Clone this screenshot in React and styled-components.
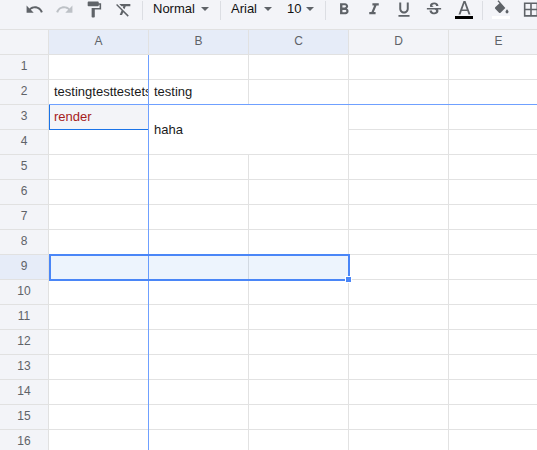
import React from 'react';
import styled, { createGlobalStyle } from 'styled-components';
import {
	MdUndo,
	MdRedo,
	MdFormatPaint,
	MdFormatClear,
	MdFormatBold,
	MdFormatItalic,
	MdFormatUnderlined,
	MdStrikethroughS,
	MdBorderAll,
} from 'react-icons/md';

const GlobalStyle = createGlobalStyle`
	html, body {
		margin: 0;
		padding: 0;
		background: #ffffff;
		overflow: hidden;
	}
`;

const Page = styled.div`
	width: 537px;
	height: 450px;
	overflow: hidden;
	font-family: 'Liberation Sans', Arial, sans-serif;
`;

const Toolbar = styled.div`
	display: flex;
	align-items: flex-start;
	height: 29px;
	padding-left: 19px;
	background: #f3f4f8;
	border-bottom: 1px solid #e1e1e1;
	color: #5f6368;
	white-space: nowrap;
`;

const IconSlot = styled.div`
	flex: none;
	display: flex;
	flex-direction: column;
	align-items: center;
	justify-content: center;
	width: 30px;
	height: 19px;
	color: ${(props) => props.color || '#5f6368'};
`;

const Separator = styled.div`
	flex: none;
	width: 1px;
	height: 19px;
	margin: 1px ${(props) => props.right ?? 10}px 0 ${(props) => props.left ?? 3}px;
	background: #dcdee3;
`;

const Select = styled.div`
	flex: none;
	display: flex;
	align-items: center;
	width: ${(props) => props.width}px;
	height: 17px;
	margin-left: ${(props) => props.left || 0}px;
	font-size: 13px;
	color: #111111;
`;

const Arrow = styled.span`
	margin-left: auto;
	margin-right: 11px;
	border-left: 4px solid transparent;
	border-right: 4px solid transparent;
	border-top: 4px solid #5f6368;
`;

const ColorSlot = styled(IconSlot)`
	position: relative;
	justify-content: flex-start;
	padding-top: ${(props) => props.top || 0}px;
	box-sizing: border-box;
`;

const ColorBar = styled.div`
	position: absolute;
	left: 6px;
	top: 16px;
	width: 18px;
	height: 3px;
	background: ${(props) => props.color};
`;

const Sheet = styled.div`
	position: relative;
	display: grid;
	grid-template-columns: 49px repeat(5, 100px);
	grid-auto-rows: 25px;
	height: 420px;
	overflow: hidden;
	font-size: 13px;
`;

const Corner = styled.div`
	background: #f3f4f8;
	border-right: 1px solid #e1e1e1;
	border-bottom: 1px solid #e1e1e1;
`;

const ColumnHead = styled.div`
	display: flex;
	align-items: center;
	justify-content: center;
	padding-bottom: 2px;
	box-sizing: border-box;
	background: ${(props) => (props.active ? '#e6ecf8' : '#f3f4f8')};
	border-right: 1px solid #e1e1e1;
	border-bottom: 1px solid #e1e1e1;
	color: #5f6368;
	font-size: 12px;
`;

const RowHead = styled(ColumnHead)`
	background: ${(props) => (props.active ? '#e6ecf8' : '#f3f4f8')};
`;

const Cell = styled.div`
	display: flex;
	align-items: center;
	box-sizing: border-box;
	padding: 0 0 2px 5px;
	overflow: hidden;
	white-space: nowrap;
	background: #ffffff;
	border-right: 1px solid #e2e2e2;
	border-bottom: 1px solid #e2e2e2;
	color: #1a1a1a;
`;

const FocusedCell = styled(Cell)`
	padding-left: 4px;
	background: #f3f4f8;
	border-left: 1px solid #1a73e8;
	border-bottom: 1px solid #1a73e8;
	color: #a61c1c;
`;

const MergedCell = styled(Cell)`
	grid-column: span 2;
	grid-row: span 2;
	padding-bottom: 0;
`;

const FreezeColumn = styled.div`
	position: absolute;
	left: 148px;
	top: 25px;
	bottom: 0;
	width: 1px;
	background: #6fa0ff;
`;

const FreezeRow = styled.div`
	position: absolute;
	left: 49px;
	right: 0;
	top: 74px;
	height: 1px;
	background: #6fa0ff;
`;

const Selection = styled.div`
	position: absolute;
	left: 49px;
	top: 224px;
	width: 301px;
	height: 27px;
	box-sizing: border-box;
	border: 2px solid #4a86f7;
	background: rgba(26, 115, 232, 0.08);
`;

const Handle = styled.div`
	position: absolute;
	right: -3px;
	bottom: -3px;
	width: 5px;
	height: 5px;
	background: #4a86f7;
	box-shadow: 0 0 0 1px #ffffff;
`;

const columns = ['A', 'B', 'C', 'D', 'E'];
const rows = Array.from({ length: 16 }, (_, i) => i + 1);

const contents = {
	A2: 'testingtesttestets',
	B2: 'testing',
};

const TextColorIcon = () => (
	<svg width="13" height="14" viewBox="0 0 13 14">
		<path fill="#5f6368" d="M5.500 0h2l5 13.500h-2l-1.200-3.400H3.700l-1.200 3.400h-2L5.500 0zM4.300 8.400h4.400L6.500 2.300 4.300 8.400z" />
	</svg>
);

const FillIcon = () => (
	<svg width="17" height="14" viewBox="0 0 20 16">
		<path
			fill="#5f6368"
			d="M6.500 0L5.300 1.200l2.300 2.300L2.600 8.400c-.5.500-.5 1.300 0 1.800l4.500 4.500c.5.500 1.300.5 1.800 0l5.600-5.600L6.500 0zM16.500 10.500s-1.800 2-1.800 3.200c0 1 .8 1.800 1.800 1.800s1.800-.8 1.800-1.800c0-1.200-1.800-3.200-1.800-3.200z"
		/>
	</svg>
);

function renderRow(row) {
	const cells = [];
	columns.forEach((column) => {
		const id = column + row;
		if (id === 'A3') {
			cells.push(<FocusedCell key={id}>render</FocusedCell>);
		} else if (id === 'B3') {
			cells.push(<MergedCell key={id}>haha</MergedCell>);
		} else if (id !== 'C3' && id !== 'B4' && id !== 'C4') {
			cells.push(<Cell key={id}>{contents[id]}</Cell>);
		}
	});
	return (
		<React.Fragment key={row}>
			<RowHead active={row === 9}>{row}</RowHead>
			{cells}
		</React.Fragment>
	);
}

export default function App() {
	return (
		<Page>
			<GlobalStyle />
			<Toolbar>
				<IconSlot><MdUndo size={21} /></IconSlot>
				<IconSlot color="#bdc1c6"><MdRedo size={21} /></IconSlot>
				<IconSlot><MdFormatPaint size={22} /></IconSlot>
				<IconSlot><MdFormatClear size={22} /></IconSlot>
				<Separator />
				<Select width={67}>Normal<Arrow /></Select>
				<Separator left={0} />
				<Select width={52}>Arial<Arrow /></Select>
				<Select width={38} left={4}>10<Arrow /></Select>
				<Separator left={0} right={3} />
				<IconSlot><MdFormatBold size={24} /></IconSlot>
				<IconSlot><MdFormatItalic size={24} /></IconSlot>
				<IconSlot><MdFormatUnderlined size={22} /></IconSlot>
				<IconSlot><MdStrikethroughS size={22} /></IconSlot>
				<ColorSlot top={1}>
					<TextColorIcon />
					<ColorBar color="#000000" />
				</ColorSlot>
				<Separator left={3} right={3} />
				<ColorSlot>
					<FillIcon />
					<ColorBar color="#ffffff" />
				</ColorSlot>
				<IconSlot><MdBorderAll size={22} /></IconSlot>
			</Toolbar>
			<Sheet>
				<Corner />
				{columns.map((column, i) => (
					<ColumnHead key={column} active={i < 3}>{column}</ColumnHead>
				))}
				{rows.map(renderRow)}
				<FreezeColumn />
				<FreezeRow />
				<Selection>
					<Handle />
				</Selection>
			</Sheet>
		</Page>
	);
}
